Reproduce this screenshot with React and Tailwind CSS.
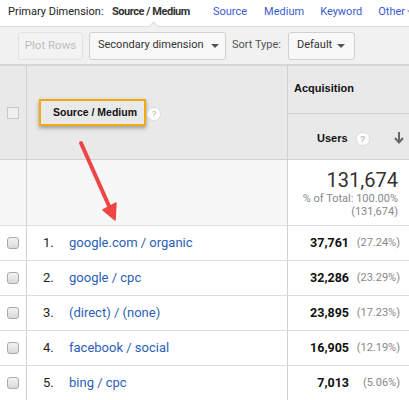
import React from "react";

const rows = [
  ["1.", "google.com / organic", "37,761", "(27.24%)"],
  ["2.", "google / cpc", "32,286", "(23.29%)"],
  ["3.", "(direct) / (none)", "23,895", "(17.23%)"],
  ["4.", "facebook / social", "16,905", "(12.19%)"],
  ["5.", "bing / cpc", "7,013", "(5.06%)"],
];

function Caret() {
  return (
    <svg width="8" height="4" viewBox="0 0 8 4" className="ml-auto shrink-0">
      <path d="M0 0 L8 0 L4 4 Z" fill="#555" />
    </svg>
  );
}

function Help() {
  return (
    <span className="inline-flex h-[14px] w-[14px] items-center justify-center rounded-full border border-[#ddd] bg-white text-[9.5px] leading-none text-[#bbb]">
      ?
    </span>
  );
}

export default function App() {
  return (
    <div className="relative h-[400px] w-[409px] overflow-hidden whitespace-nowrap bg-white font-['Roboto',sans-serif] text-[#222]">
      {/* Top nav */}
      <div className="flex h-[26px] items-center pl-[8px] pb-[2px] text-[11px]">
        <span className="w-[93px] shrink-0 text-[#222]">Primary Dimension:</span>
        <span className="ml-[11px] w-[84px] shrink-0 text-[11px] font-bold tracking-[-0.45px] text-[#333]">Source / Medium</span>
        <span className="ml-[17px] shrink-0 text-[#3b5bd0]">Source</span>
        <span className="ml-[17px] shrink-0 text-[#3b5bd0]">Medium</span>
        <span className="ml-[16px] shrink-0 text-[#3b5bd0]">Keyword</span>
        <span className="ml-[16px] shrink-0 text-[#3b5bd0]">Other</span>
        <svg width="6" height="4" viewBox="0 0 6 4" className="ml-[2px] shrink-0">
          <path d="M0 0 L6 0 L3 4 Z" fill="#aaa" />
        </svg>
      </div>

      {/* Toolbar */}
      <div className="relative flex h-[38px] items-center border-t border-[#dcdcdc] bg-[#f1f1f1] pl-[18px] text-[11px]">
        <span className="absolute left-[150px] top-[-4px] h-[7px] w-[7px] rotate-45 border-l border-t border-[#dcdcdc] bg-[#f1f1f1]" />
        <div className="flex h-[28px] w-[65px] shrink-0 items-center justify-center rounded-[3px] border border-[#e2e2e2] bg-[#f3f3f3] text-[11.5px] text-[#bdbdbd]">
          Plot Rows
        </div>
        <div className="ml-[6px] flex h-[28px] w-[137px] shrink-0 items-center rounded-[3px] border border-[#d0d0d0] bg-[#f8f8f8] pl-[8px] pr-[6px] text-[#333]">
          Secondary dimension
          <Caret />
        </div>
        <span className="ml-[6px] shrink-0 text-[#555]">Sort Type:</span>
        <div className="ml-[7px] flex h-[28px] w-[67px] shrink-0 items-center rounded-[3px] border border-[#d0d0d0] bg-[#f8f8f8] pl-[8px] pr-[9px] text-[#333]">
          Default
          <Caret />
        </div>
      </div>

      {/* Table header */}
      <div className="grid h-[96px] grid-cols-[27px_261px_121px] border-t-2 border-b border-t-[#d6d6d6] border-b-[#d0d0d0] bg-[#e9e9e9]">
        <div className="flex items-center justify-center border-r border-[#d0d0d0]">
          <span className="h-[12px] w-[12px] border border-[#c8c8c8] bg-[#efefef]" />
        </div>
        <div className="relative flex items-center border-r border-[#d0d0d0]">
          <div className="ml-[12px] flex h-[27px] w-[107px] items-center border-[2.5px] border-[#f5a911] pl-[12px] font-['Liberation_Sans',Arial,sans-serif] text-[10.5px] font-bold text-[#111] shadow-[0_2px_4px_rgba(0,0,0,0.35)]">
            Source / Medium
          </div>
          <span className="ml-[1px]">
            <Help />
          </span>
        </div>
        <div className="flex flex-col">
          <div className="flex h-[48px] items-center border-b border-[#d0d0d0] pb-[2px] pl-[6px] font-['Liberation_Sans',Arial,sans-serif] text-[11px] font-bold text-[#111]">
            Acquisition
          </div>
          <div className="flex flex-1 items-center pl-[29px] pr-[5px] pt-[3px] font-['Liberation_Sans',Arial,sans-serif] text-[11px] font-bold text-[#111]">
            Users
            <span className="ml-[8px]">
              <Help />
            </span>
            <svg width="10" height="12" viewBox="0 0 10 12" className="ml-auto">
              <path d="M5 0 V10 M1 6 L5 10.5 L9 6" stroke="#666" strokeWidth="2" fill="none" />
            </svg>
          </div>
        </div>
      </div>

      {/* Summary row */}
      <div className="grid h-[66px] grid-cols-[27px_261px_121px] border-b border-[#dedede]">
        <div className="border-r border-[#d0d0d0] bg-[#f7f7f7]" />
        <div className="border-r border-[#d0d0d0] bg-[#f7f7f7]" />
        <div className="flex flex-col items-end pr-[11px] pt-[10px] leading-none">
          <span className="text-[20px] text-[#333]">131,674</span>
          <span className="mt-[3px] text-[11px] text-[#888]">% of Total: 100.00%</span>
          <span className="mt-[2px] text-[11px] text-[#888]">(131,674)</span>
        </div>
      </div>

      {/* Data rows */}
      {rows.map((r) => (
        <div
          key={r[0]}
          className="grid h-[35px] grid-cols-[27px_261px_121px] border-b border-[#dedede] text-[13px]"
        >
          <div className="flex items-center justify-center border-r border-[#d0d0d0]">
            <span className="h-[12px] w-[12px] rounded-[3px] border border-[#a9a9a9] bg-gradient-to-b from-[#f4f4f4] to-[#d9d9d9]" />
          </div>
          <div className="flex items-center border-r border-[#d0d0d0]">
            <span className="w-[42px] pl-[16px] text-[#222]">{r[0]}</span>
            <span className="text-[#2a5fb8]">{r[1]}</span>
          </div>
          <div className="flex items-center justify-end pr-[9px]">
            <span className="text-[12.5px] font-bold text-[#111]">{r[2]}</span>
            <span className="ml-[7px] w-[44px] text-right text-[11px] text-[#888]">{r[3]}</span>
          </div>
        </div>
      ))}

      {/* Red annotation arrow */}
      <svg
        className="pointer-events-none absolute left-0 top-0"
        width="409"
        height="400"
        viewBox="0 0 409 400"
      >
        <line x1="81" y1="143" x2="109" y2="206" stroke="#f04545" strokeWidth="4" strokeLinecap="round" />
        <path d="M103 210 L116 203 L115 220 Z" fill="#f04545" stroke="#f04545" strokeWidth="1.5" strokeLinejoin="round" />
      </svg>
    </div>
  );
}
